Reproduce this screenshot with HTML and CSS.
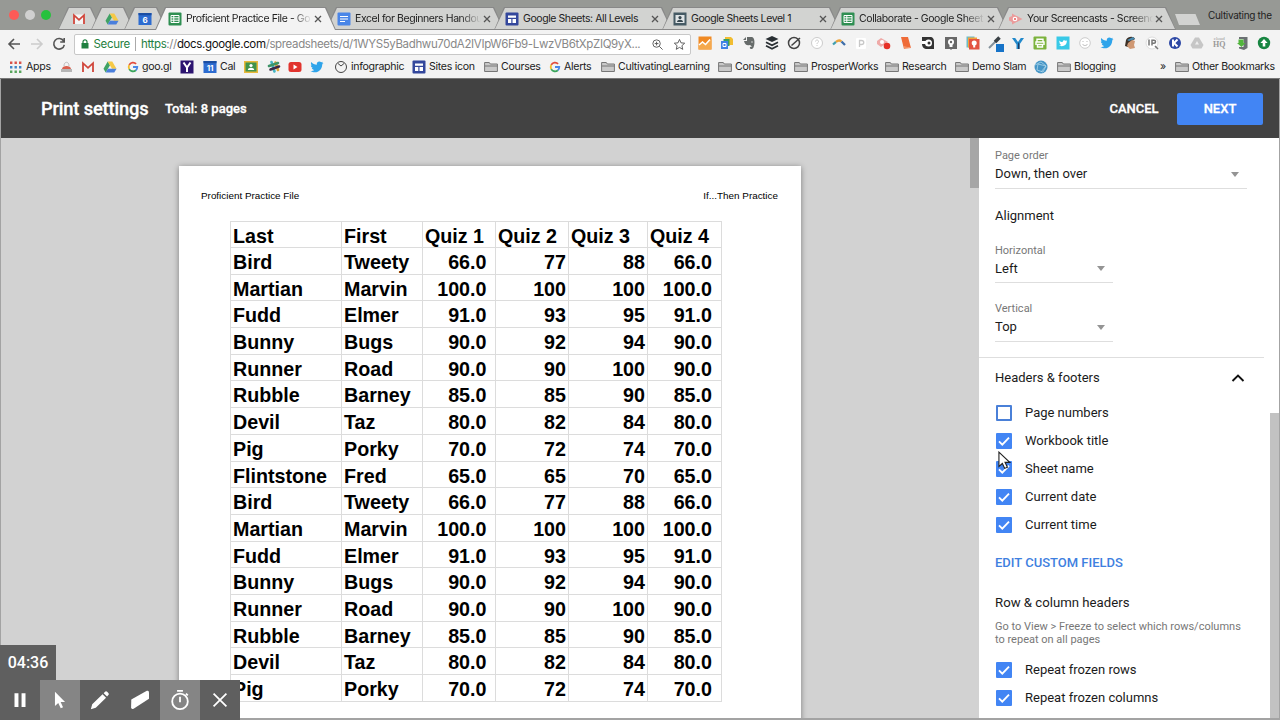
FILE: index.html
```html
<!DOCTYPE html>
<html lang="en">
<head>
    <meta charset="utf-8"/>
    <title>Proficient Practice File - Google Sheets</title>
    <link rel="stylesheet" href="styles.css">
</head>
<body>
    <!-- shared icons -->
    <svg class="sprite" width="0" height="0">
        <symbol id="gmail" viewBox="0 0 14 14"><path fill="#f4f4f4" d="M1 2.500h12v9.500H1z"/><path fill="none" stroke="#d0453a" stroke-width="1.800" d="M2 12V3.200l5 4.600 5-4.600V12"/></symbol>
        <symbol id="drive" viewBox="0 0 14 14"><path fill="#3fa264" d="M4.700 1.500L0.500 8.800l2.200 3.700L7 5.200z"/><path fill="#f6c945" d="M4.700 1.500h4.600l4.200 7.300H9z"/><path fill="#4a7fdc" d="M4.900 8.800h8.600l-2.200 3.700H2.700z"/></symbol>
        <symbol id="cal" viewBox="0 0 14 14"><path fill="#2d6cd0" d="M0.500 1h13v12h-13z"/><path fill="#1b4ea3" d="M0.500 1h13v2.200h-13z"/></symbol>
        <symbol id="sheets" viewBox="0 0 14 14"><rect x=".5" y=".5" width="13" height="13" rx="1" fill="#2f8f52"/><path fill="none" stroke="#fff" stroke-width="1" d="M3 3.500h8v7H3zM3 5.800h8M3 8.200h8M5.800 3.500v7"/></symbol>
        <symbol id="docs" viewBox="0 0 14 14"><rect x=".5" y=".5" width="13" height="13" rx="1" fill="#4a86e8"/><path stroke="#fff" stroke-width="1.200" d="M3 4.500h8M3 7h8M3 9.500h5"/></symbol>
        <symbol id="sites" viewBox="0 0 14 14"><rect x=".5" y=".5" width="13" height="13" rx="1" fill="#33479c"/><path fill="#fff" d="M3 3.500h8v2.300H3zM3 7h3.300v4H3zM7.500 7H11v4H7.500z"/></symbol>
        <symbol id="g" viewBox="0 0 14 14"><g fill="none" stroke-width="2.100"><path stroke="#e24a3b" d="M2.600 4.600A5 5 0 0 1 10.600 3.400"/><path stroke="#f2bd2e" d="M2.600 9.400a5 5 0 0 1 0-4.800"/><path stroke="#3ba55c" d="M10.300 10.800a5 5 0 0 1-7.700-1.400"/><path stroke="#4a86e8" d="M7 7h5a5 5 0 0 1-1.700 3.800"/></g></symbol>
        <symbol id="folder" viewBox="0 0 14 14"><path fill="#c9c9c9" stroke="#777" d="M.6 11.500v-9h4.700l1 1.500h7.100v7.500zM.6 6h12.800"/></symbol>
        <symbol id="bird" viewBox="0 0 14 14"><path fill="#2fa4ea" d="M13.500 3.200l-1.300 1.300C12.200 9 9 12.300 5 12.300c-1.700 0-3.200-.4-4.500-1.300 1.400.1 2.700-.2 3.700-1.100-1.200-.1-2-.8-2.400-1.900h1.100C1.600 7.600.9 6.600.9 5.300l1.100.3C.9 4.700.6 3.300 1.300 2c1.500 1.700 3.200 2.600 5.500 2.800-.5-3 2.700-4.200 4.500-2.500l1.700-.6-1 1.500z"/></symbol>
        <symbol id="close" viewBox="0 0 10 10"><path stroke="#555" stroke-width="1.300" d="M2 2l6 6M8 2L2 8"/></symbol>
        <symbol id="check" viewBox="0 0 16 16"><path fill="none" stroke="#fff" stroke-width="1.900" d="M3 8.300l3.300 3.300L13 4.700"/></symbol>
    </svg>

    <div class="browser">
        <!-- window tabs -->
        <div class="tab-strip">
            <div class="lights"><i class="red"></i><i class="grey"></i><i class="green"></i></div>
            <div class="tab pinned"><svg class="fav"><use href="#gmail"/></svg></div>
            <div class="tab pinned"><svg class="fav"><use href="#drive"/></svg></div>
            <div class="tab pinned"><span class="cal-icon"><svg class="fav"><use href="#cal"/></svg><b>6</b></span></div>
            <div class="tab active"><svg class="fav"><use href="#sheets"/></svg><span class="tab-title fade">Proficient Practice File - Go</span><svg class="close"><use href="#close"/></svg></div>
            <div class="tab"><svg class="fav"><use href="#docs"/></svg><span class="tab-title fade">Excel for Beginners Handou</span><svg class="close"><use href="#close"/></svg></div>
            <div class="tab"><svg class="fav"><use href="#sites"/></svg><span class="tab-title">Google Sheets: All Levels</span><svg class="close"><use href="#close"/></svg></div>
            <div class="tab"><svg class="fav" viewBox="0 0 14 14"><rect x=".5" y=".5" width="13" height="13" fill="#455a64"/><path fill="#dfe4e6" d="M2.500 3h9v8h-9z"/><circle cx="7" cy="5.600" r="1.600" fill="#37474f"/><path fill="#37474f" d="M4 10c0-3 6-3 6 0z"/></svg><span class="tab-title">Google Sheets Level 1</span><svg class="close"><use href="#close"/></svg></div>
            <div class="tab"><svg class="fav"><use href="#sheets"/></svg><span class="tab-title fade">Collaborate - Google Sheet</span><svg class="close"><use href="#close"/></svg></div>
            <div class="tab"><svg class="fav" viewBox="0 0 14 14"><path fill="#eb9c9c" d="M0 5.500l3-1.500V1.500l10.500 5.500L3 12.500V10L0 8.500z"/><circle cx="6" cy="7" r="2.300" fill="#fff"/><circle cx="6" cy="7" r="1.100" fill="#e86464"/></svg><span class="tab-title fade">Your Screencasts - Screenc</span><svg class="close"><use href="#close"/></svg></div>
            <div class="new-tab"></div>
            <div class="profile">Cultivating the</div>
        </div>

        <!-- address bar -->
        <div class="toolbar">
            <svg class="nav" viewBox="0 0 16 16"><path d="M14 8H3M8 3L3 8l5 5"/></svg>
            <svg class="nav off" viewBox="0 0 16 16"><path d="M2 8h11M8 3l5 5-5 5"/></svg>
            <svg class="nav" viewBox="0 0 16 16"><path d="M12.600 5A5.300 5.300 0 1 0 13.300 8.800M13.200 2v4H9.200"/></svg>
            <div class="omnibox">
                <svg class="lock" viewBox="0 0 8 10"><path fill="#1f8040" d="M.5 4h7v5.500h-7z"/><path fill="none" stroke="#1f8040" stroke-width="1.200" d="M2 4.500V2.800a2 2 0 0 1 4 0v1.700"/></svg>
                <span class="secure">Secure</span>
                <span class="url"><span class="https">https</span>://<span class="host">docs.google.com</span><span class="path">/spreadsheets/d/1WYS5yBadhwu70dA2IVIpW6Fb9-LwzVB6tXpZIQ9yX...</span></span>
                <svg class="omni-icon" viewBox="0 0 14 14"><circle cx="6" cy="6" r="4"/><path d="M9 9l3.500 3.500M4 6h4M6 4v4"/></svg>
                <svg class="omni-icon" viewBox="0 0 14 14"><path d="M7 1.500l1.600 3.700 4 .4-3 2.700.9 3.900L7 10.100l-3.500 2.100.9-3.900-3-2.700 4-.4z"/></svg>
            </div>
            <div class="extensions">
                <svg viewBox="0 0 14 14"><path fill="#f08a24" d="M.5.500h13v13H.5z"/><path fill="#f5a94d" d="M.5 9l4-4 3 3 6-5v10.500H.5z"/><path fill="none" stroke="#fff" stroke-width="1.600" d="M1 9l3.500-3 3 2.500L12 3.500"/></svg>
                <svg viewBox="0 0 14 14"><path fill="#f1bd31" d="M5 1h6l2 2v6H5z"/><path fill="#34a065" d="M3.500 3h6v7h-6z"/><path fill="#3f83e6" d="M1 5h7v8H1z"/><path fill="none" stroke="#fff" d="M3 7.500h3v3H3z"/></svg>
                <svg viewBox="0 0 14 14"><path fill="#666b6a" d="M5 1h5c3 1 3 7 1.500 10.500C10 14 7 13 8 11l2-.5-2-1.500c-3 1-5 0-6-4h3z"/><path fill="#666b6a" d="M1 4l3-3v3z"/><circle cx="10" cy="6" r=".8" fill="#ddd"/></svg>
                <svg viewBox="0 0 14 14"><path fill="#292f33" d="M7 0l6.500 3L7 6 .5 3z"/><path fill="none" stroke="#292f33" stroke-width="1.800" d="M1 6.300l6 2.900 6-2.900M1 9.800l6 2.900 6-2.900"/></svg>
                <svg viewBox="0 0 14 14"><circle cx="7" cy="7" r="5.500" fill="none" stroke="#444" stroke-width="1.500"/><path stroke="#444" stroke-width="1.600" d="M4.500 9.500L13 2"/></svg>
                <svg viewBox="0 0 14 14"><circle cx="7" cy="7" r="5.500" fill="#fff" stroke="#ccc"/><path fill="none" stroke="#ccc" d="M5.500 5.500c0-2 3-2 3 0 0 1.200-1.500 1-1.500 2.500M7 9v1"/></svg>
                <svg viewBox="0 0 14 14"><g fill="none" stroke-width="2.300"><path stroke="#3f9fb0" d="M1 8.500l3-2.700"/><path stroke="#eba23a" d="M4 5.800c2-1.600 4-1.600 5.500-.3"/><path stroke="#3e6da8" d="M9.500 5.500L13 9"/></g></svg>
                <svg viewBox="0 0 14 14"><rect x="2" y="2" width="10" height="11" rx="1" fill="#fff"/><path fill="none" stroke="#c8c8c8" stroke-width="1.300" d="M5.500 11V4.500h2c3 0 3 4 0 4h-2"/></svg>
                <svg viewBox="0 0 14 14"><path fill="#efaaa8" d="M0 5l4-3 7 4-7 5-4-3z"/><circle cx="5" cy="6" r="2" fill="#fff"/><circle cx="10" cy="10" r="3.300" fill="#e63027"/></svg>
                <svg viewBox="0 0 14 14"><path fill="#ef6b37" d="M2 1h7l3 11-4-1-3 2z"/><path fill="#f49063" d="M5 10l7 2-7 1z"/></svg>
                <svg viewBox="0 0 14 14"><path fill="#333" d="M1 1h8c3 0 4 2 4 5v7H6c-3 0-5-2-5-5z"/><circle cx="7.500" cy="7" r="3.500" fill="#fff"/><circle cx="8" cy="7" r="1.500" fill="#333"/><path fill="#fff" d="M1 5h4v3H1z"/></svg>
                <svg viewBox="0 0 14 14"><path fill="#686868" d="M1 1h12v12H8l-1 1-1-1H1z"/><circle cx="7" cy="6" r="3" fill="#fff"/><path fill="#fff" d="M5.500 8h3v3h-3z"/><circle cx="7" cy="6" r="1.200" fill="#686868"/></svg>
                <svg viewBox="0 0 14 14"><path fill="#6bbbc6" d="M.5.500h8v11h-8z"/><path fill="#f1a33a" d="M2 1.500h9v10H2z"/><path fill="#e35342" d="M3 3h10.500v10.500H3z"/><circle cx="8.200" cy="7" r="2.500" fill="#fff"/><path fill="#fff" d="M7.200 9h2v2.500h-2z"/></svg>
                <svg class="wide" viewBox="0 0 16 16"><path stroke="#83919b" stroke-width="2" d="M1 12l7-7"/><path stroke="#3a4045" stroke-width="3.500" d="M7 6l4.500-4.500"/><path fill="#1673c8" d="M8 8h8v8H8z"/></svg>
                <svg viewBox="0 0 14 14"><path fill="#2289cb" d="M1 2h3.200L7 6l2.800-4H13L8.500 8.500V13h-3V8.500z"/><path fill="#173a66" d="M7 6l1.500 2.500V13H7z"/></svg>
                <svg viewBox="0 0 14 14"><rect x=".5" y=".5" width="13" height="13" rx="1" fill="#7cb33d"/><path fill="none" stroke="#fff" stroke-width="1.400" d="M4 6V3.200h6V6M3 9V6h8v3M4.500 8.500h5V11h-5z"/></svg>
                <svg viewBox="0 0 14 14"><path fill="#38c9e7" d="M.5.500h13v13H.5z"/><svg x="2.500" y="2.500" width="9" height="9" viewBox="0 0 14 14"><path fill="#fff" d="M13 3.500c0 5-3 8.500-8 8.500-2 0-3-.5-4-1l3-1-2-2-1-5c2 2 3 2.500 5.500 2.500 0-3 3-3.500 4.500-2L13 3z"/></svg></svg>
                <svg viewBox="0 0 14 14"><circle cx="7" cy="7" r="5.300" fill="#fff" stroke="#ccc"/><path fill="none" stroke="#bbb" d="M4.500 8c1 2 4 2 5 0M5 5v1M9 5v1"/></svg>
                <svg><use href="#bird"/></svg>
                <svg viewBox="0 0 14 14"><path fill="#3d3026" d="M3 4c2-4 8-4 9-1l-3 2-4 6-3-1z"/><path fill="#cf9873" d="M5 7l4-3 3 1-1 4 1 3-5 1-3-3z"/><path fill="#4b8db3" d="M4 4l6-3 2 2-6 2z"/></svg>
                <svg viewBox="0 0 14 14"><circle cx="7" cy="7" r="6" fill="#fff" stroke="#ddd"/><path fill="none" stroke="#777" stroke-width="1.500" d="M4 3.500v6M7 9.500V4.200h2c2 0 2 3 0 3H7M10 10l3 3"/></svg>
                <svg viewBox="0 0 14 14"><circle cx="7" cy="7" r="6" fill="#2d48a5"/><path fill="none" stroke="#fff" stroke-width="2" d="M5 3.500v7M9.500 3.500L6 7l3.500 3.500"/></svg>
                <svg viewBox="0 0 14 14"><path fill="#c6c6c6" d="M5 1.500h4L13.500 9l-2 3.500h-9L.5 9z"/><path fill="#eee" d="M7 5l2 3.500H5z"/></svg>
                <div class="cloud-hq">cloud<b>HQ</b></div>
                <svg viewBox="0 0 14 14"><path fill="#6b7073" d="M4 1h8.500v11L9 14l-5-1.500V11h4.500V3H4z"/><path fill="#51b53c" d="M3.500 3.500h5V7h2L6.500 11 2 7h1.500z"/></svg>
                <svg viewBox="0 0 14 14"><circle cx="7" cy="7" r="6.200" fill="#178541"/><path fill="#fff" d="M7 3l3.600 4H8.300v3.500H5.700V7H3.400z"/></svg>
            </div>
        </div>

        <!-- bookmarks bar -->
        <div class="bookmarks">
            <span class="bm"><svg viewBox="0 0 14 14"><g stroke-width="2.400" stroke-dasharray="2.400 2.100"><path stroke="#d9534a" d="M1 2.700h12"/><path stroke="#4286c8" d="M1 7.200h12"/><path stroke="#58a55c" d="M1 11.700h12"/></g></svg>Apps</span>
            <span class="bm"><svg viewBox="0 0 14 14"><path fill="none" stroke="#bbb" d="M4 6c0-5 5-5 5 0"/><path fill="#d9604f" d="M2 9c0-4 9-4 9 0z"/><path fill="#b5b5b5" d="M1 9h11v3H1z"/></svg></span>
            <span class="bm"><svg><use href="#gmail"/></svg></span>
            <span class="bm"><svg><use href="#drive"/></svg></span>
            <span class="bm tight"><svg><use href="#g"/></svg>goo.gl</span>
            <span class="bm"><svg viewBox="0 0 14 14"><path fill="#2c1470" d="M.5.500h13v13H.5z"/><path fill="none" stroke="#fff" stroke-width="2" d="M3.500 2.500L7 7.500l3.500-5M7 7v5"/></svg></span>
            <span class="bm"><span class="cal-icon"><svg><use href="#cal"/></svg><b>11</b></span>Cal</span>
            <span class="bm"><svg viewBox="0 0 14 14"><path fill="#e9b93b" d="M0 1h14v12H0z"/><path fill="#41934b" d="M1.500 2.500h11v9h-11z"/><circle cx="7" cy="5.500" r="1.600" fill="#fff"/><path fill="#fff" d="M3.800 10c0-3 6.400-3 6.400 0z"/></svg></span>
            <span class="bm"><svg viewBox="0 0 14 14"><g stroke-width="2.600" stroke-linecap="round"><path stroke="#45b5c4" d="M4.500 2l3 9.500"/><path stroke="#e0a632" d="M8.500 2.500L11 10"/><path stroke="#3d9467" d="M2 6l9-3"/><path stroke="#3b2a46" d="M3.500 9.500l8.500-3"/></g></svg></span>
            <span class="bm"><svg viewBox="0 0 14 14"><rect x=".5" y="2" width="13" height="10" rx="2.500" fill="#e1342e"/><path fill="#fff" d="M5.500 4.500L9.500 7l-4 2.500z"/></svg></span>
            <span class="bm"><svg><use href="#bird"/></svg></span>
            <span class="bm"><svg viewBox="0 0 14 14"><circle cx="7" cy="7" r="5.500" fill="none" stroke="#444"/><path fill="none" stroke="#444" d="M4 3.500L7 6l3-2.500"/></svg>infographic</span>
            <span class="bm"><svg><use href="#sites"/></svg>Sites icon</span>
            <span class="bm"><svg><use href="#folder"/></svg>Courses</span>
            <span class="bm tight"><svg><use href="#g"/></svg>Alerts</span>
            <span class="bm"><svg><use href="#folder"/></svg>CultivatingLearning</span>
            <span class="bm"><svg><use href="#folder"/></svg>Consulting</span>
            <span class="bm"><svg><use href="#folder"/></svg>ProsperWorks</span>
            <span class="bm"><svg><use href="#folder"/></svg>Research</span>
            <span class="bm"><svg><use href="#folder"/></svg>Demo Slam</span>
            <span class="bm"><svg viewBox="0 0 14 14"><circle cx="7" cy="7" r="6.500" fill="#4595c6"/><path fill="none" stroke="#a9d4ea" stroke-width=".8" d="M1 5l6-3 5 4-3 6-6-2 1-6 8 2-5 6"/></svg></span>
            <span class="bm"><svg><use href="#folder"/></svg>Blogging</span>
            <span class="bm">»</span>
            <span class="bm"><svg><use href="#folder"/></svg>Other Bookmarks</span>
        </div>
    </div>

    <div class="app">
        <div class="app-header">
            <h1>Print settings</h1>
            <span class="total">Total: 8 pages</span>
            <button class="cancel">CANCEL</button>
            <button class="next">NEXT</button>
        </div>

        <div class="main">
            <div class="preview">
                <div class="paper">
                    <div class="paper-header"><span>Proficient Practice File</span><span>If...Then Practice</span></div>
                    <div class="sheet" id="sheet"></div>
                </div>
                <div class="preview-thumb"></div>
            </div>

            <div class="settings">
                <div class="field wide">
                    <label>Page order</label>
                    <div class="select">Down, then over<i></i></div>
                </div>
                <h3 class="alignment">Alignment</h3>
                <div class="field horizontal">
                    <label>Horizontal</label>
                    <div class="select">Left<i></i></div>
                </div>
                <div class="field">
                    <label>Vertical</label>
                    <div class="select">Top<i></i></div>
                </div>
                <div class="section-title">
                    <h3>Headers &amp; footers</h3>
                    <svg viewBox="0 0 14 14"><path fill="none" stroke="#111" stroke-width="1.900" d="M1.500 10L7 4.500l5.500 5.500"/></svg>
                </div>
                <div class="option"><span class="box"></span>Page numbers</div>
                <div class="option"><span class="box on"><svg><use href="#check"/></svg></span>Workbook title</div>
                <div class="option">
                    <span class="box on"><svg><use href="#check"/></svg>
                        <svg class="cursor" viewBox="0 0 14 20"><path fill="#fff" stroke="#222" stroke-width="1.200" d="M1 1v15.500l3.700-3.300 2.500 5.300 2.900-1.300-2.500-5.200h5z"/></svg>
                    </span>Sheet name
                </div>
                <div class="option"><span class="box on"><svg><use href="#check"/></svg></span>Current date</div>
                <div class="option"><span class="box on"><svg><use href="#check"/></svg></span>Current time</div>
                <div class="edit-link">EDIT CUSTOM FIELDS</div>
                <h3 class="row-headers">Row &amp; column headers</h3>
                <p class="hint">Go to View &gt; Freeze to select which rows/columns<br>to repeat on all pages</p>
                <div class="option"><span class="box on"><svg><use href="#check"/></svg></span>Repeat frozen rows</div>
                <div class="option"><span class="box on"><svg><use href="#check"/></svg></span>Repeat frozen columns</div>
                <div class="settings-thumb"></div>
            </div>
        </div>
    </div>

    <!-- screen recorder controls -->
    <div class="recorder">
        <div class="timer">04:36</div>
        <div class="controls">
            <span><svg viewBox="0 0 24 24"><path fill="#fff" d="M6 4.500h4.300v15H6zM13.700 4.500H18v15h-4.300z"/></svg></span>
            <span class="lit"><svg viewBox="0 0 24 24"><path fill="#fff" d="M6.500 3v15.500l3.600-3.200 2.700 5.700 2.500-1.200-2.600-5.500h4.800z"/></svg></span>
            <span><svg viewBox="0 0 24 24"><path fill="#fff" d="M2 22l1.500-5.500L14.800 5.700l3.800 3.800L7.400 20.500zM16 4.600l1.800-1.800q1-.8 2 .2l1.500 1.500q.8 1 0 1.900l-1.600 1.700z"/></svg></span>
            <span><svg viewBox="0 0 24 24"><path fill="#fff" d="M2.500 11.500L19.500 2q2.300-.7 2.300 1.600v7L5 21.500q-2.600 1-2.700-1.500z"/></svg></span>
            <span class="lit"><svg viewBox="0 0 24 24"><circle cx="12" cy="13.500" r="8.500" fill="none" stroke="#fff" stroke-width="2"/><path stroke="#fff" stroke-width="2" d="M12 8.500v6M8.800 2h6.400M18.500 5l2 2"/></svg></span>
            <span><svg viewBox="0 0 24 24"><path stroke="#fff" stroke-width="1.900" d="M5 5l14 14M19 5L5 19"/></svg></span>
        </div>
    </div>

    <script>
        // quiz scores shown on the printed page
        const header = ['Last', 'First', 'Quiz 1', 'Quiz 2', 'Quiz 3', 'Quiz 4'];
        const students = [
            ['Bird', 'Tweety', '66.0', '77', '88', '66.0'],
            ['Martian', 'Marvin', '100.0', '100', '100', '100.0'],
            ['Fudd', 'Elmer', '91.0', '93', '95', '91.0'],
            ['Bunny', 'Bugs', '90.0', '92', '94', '90.0'],
            ['Runner', 'Road', '90.0', '90', '100', '90.0'],
            ['Rubble', 'Barney', '85.0', '85', '90', '85.0'],
            ['Devil', 'Taz', '80.0', '82', '84', '80.0'],
            ['Pig', 'Porky', '70.0', '72', '74', '70.0'],
            ['Flintstone', 'Fred', '65.0', '65', '70', '65.0']
        ];
        const rows = [header].concat(students, students.slice(0, 8));
        const sheet = document.getElementById('sheet');

        rows.forEach(function(row, i) {
            const line = document.createElement('div');
            line.className = i === 0 ? 'row head' : 'row';
            row.forEach(function(value) {
                const cell = document.createElement('span');
                cell.textContent = value;
                line.appendChild(cell);
            });
            sheet.appendChild(line);
        });
    </script>
</body>
</html>
```
FILE: styles.css
```css
* {
    box-sizing: border-box;
}
body {
    margin: 0;
    width: 1280px;
    height: 720px;
    overflow: hidden;
    position: relative;
    font-family: Roboto, "Liberation Sans", sans-serif;
    color: #1b1b1b;
    background: #fff;
}
h1, h3, p {
    margin: 0;
    font-weight: normal;
}
.sprite {
    position: absolute;
}

/* browser chrome */
.browser {
    height: 79px;
    background: #f3f3f3;
    border-bottom: 1px solid #777;
    font-family: Inter, Roboto, sans-serif;
    font-size: 10.600px;
    letter-spacing: -0.300px;
    color: #222;
}
.tab-strip {
    height: 30px;
    padding-top: 7px;
    display: flex;
    background: #979995;
    position: relative;
}
.lights {
    width: 58px;
    padding: 3px 0 0 9px;
    display: flex;
    gap: 6px;
}
.lights i {
    width: 10px;
    height: 10px;
    border-radius: 50%;
}
.lights .red { background: #fc5b57; }
.lights .grey { background: #d0d0d0; }
.lights .green { background: #27c13e; }
.tab {
    position: relative;
    z-index: 1;
    display: flex;
    align-items: center;
    flex: none;
    width: 178px;
    height: 23px;
    margin-right: -10px;
    padding: 0 10px 0 11px;
    background: #888;
    clip-path: polygon(10px 0, calc(100% - 10px) 0, 100% 100%, 0 100%);
}
.tab::before {
    content: "";
    position: absolute;
    inset: 1px 1px 1px 1px;
    background: #d2d3d1;
    clip-path: polygon(10px 0, calc(100% - 10px) 0, 100% 100%, 0 100%);
}
.tab > * {
    position: relative;
    flex: none;
}
.tab.pinned {
    width: 43px;
    padding-left: 14px;
}
.tab.active {
    z-index: 2;
    width: 181px;
    margin-left: -2px;
    padding-left: 13px;
}
.tab.active::before {
    bottom: 0;
    background: #f3f3f3;
}
.fav {
    width: 14px;
    height: 14px;
}
.tab-title {
    width: 126px;
    margin-left: 4px;
    overflow: hidden;
    white-space: nowrap;
    font-size: 10.500px;
    line-height: 15px;
    letter-spacing: -0.420px;
}
.tab-title.fade {
    -webkit-mask-image: linear-gradient(to right, #000 84%, transparent 100%);
    mask-image: linear-gradient(to right, #000 84%, transparent 100%);
}
.close {
    width: 10px;
    height: 10px;
    margin-left: 1px;
}
.cal-icon {
    display: inline-flex;
    position: relative;
}
.cal-icon b {
    position: absolute;
    left: 0;
    width: 14px;
    top: 3px;
    font-size: 8px;
    line-height: 10px;
    text-align: center;
    color: #fff;
}
.new-tab {
    width: 25px;
    height: 11px;
    flex: none;
    margin: 7px 0 0 9px;
    background: #d2d3d1;
    clip-path: polygon(0 0, 82% 0, 100% 100%, 16% 100%);
}
.profile {
    margin-left: 8px;
    padding-top: 2px;
    font-size: 10px;
    white-space: nowrap;
}
.toolbar {
    height: 28px;
    display: flex;
    align-items: center;
    padding-left: 6px;
}
.nav {
    width: 16px;
    height: 16px;
    margin-right: 6.500px;
    fill: none;
    stroke: #555;
    stroke-width: 1.600;
}
.nav.off {
    stroke: #ccc;
}
.omnibox {
    width: 617px;
    height: 21px;
    flex: none;
    display: flex;
    align-items: center;
    padding-left: 6px;
    background: #fff;
    border: 1px solid #c8c8c8;
    border-radius: 2px;
    font-size: 11.500px;
}
.lock {
    width: 8px;
    height: 10px;
    flex: none;
}
.secure {
    margin-left: 5px;
    padding-right: 5px;
    border-right: 1px solid #aaa;
    color: #1f8040;
}
.url {
    width: 510px;
    flex: none;
    margin-left: 5px;
    letter-spacing: -0.360px;
    white-space: nowrap;
    color: #888;
}
.https { color: #1f8040; }
.host { color: #111; }
.omni-icon {
    width: 13px;
    height: 13px;
    margin-right: 9px;
    flex: none;
    fill: none;
    stroke: #555;
}
.extensions {
    display: flex;
    margin-left: 3px;
}
.extensions > * {
    width: 14px;
    height: 14px;
    flex: none;
    margin: 0 4.200px;
}
.extensions .wide {
    width: 16px;
    height: 16px;
    margin: 0 3.200px;
}
.cloud-hq {
    display: flex;
    flex-direction: column;
    align-items: center;
    font: 5px/5px "Liberation Serif", serif;
    letter-spacing: 0;
    color: #999;
}
.cloud-hq b {
    font-size: 8px;
    line-height: 8px;
}
.bookmarks {
    height: 17px;
    display: grid;
    grid-template-columns: 51px 21px 22px 24px 53px 23px 41px 23px 21px 22px 24px 78px 72px 65px 52px 117px 76px 91px 70px 79px 23px 103px 15px 104px;
    align-items: center;
    padding-left: 9px;
}
.bm {
    display: flex;
    align-items: center;
    white-space: nowrap;
}
.bm svg {
    width: 14px;
    height: 14px;
    margin-right: 3px;
    flex: none;
}
.bm.tight svg {
    width: 12px;
}

/* print settings */
.app {
    height: 641px;
    display: flex;
    flex-direction: column;
    border: solid #a3a3a3;
    border-width: 0 1px 2px 1px;
}
.app-header {
    height: 59px;
    flex: none;
    display: flex;
    align-items: center;
    padding: 0 16px 0 40px;
    background: #424242;
    color: #fff;
    -webkit-text-stroke: 0.300px #fff;
}
.app-header h1 {
    width: 124px;
    font-size: 18.300px;
    font-weight: 500;
    letter-spacing: -0.150px;
    white-space: nowrap;
}
.total {
    font-size: 13px;
    font-weight: 500;
}
.app-header button {
    height: 32px;
    padding: 0;
    border: none;
    border-radius: 2px;
    background: none;
    color: #fff;
    font: 500 13px Roboto, sans-serif;
}
.app-header .cancel {
    width: 86px;
    margin-left: auto;
}
.app-header .next {
    width: 86px;
    background: #4285f4;
}
.main {
    flex: 1;
    min-height: 0;
    display: flex;
}
.preview {
    width: 978px;
    flex: none;
    position: relative;
    overflow: hidden;
    padding: 28px 0 0 178px;
    background: #d2d2d2;
}
.paper {
    width: 622px;
    height: 800px;
    background: #fff;
    box-shadow: 0 1px 6px rgba(0,0,0,0.4);
    font-family: "Liberation Sans", Arial, sans-serif;
    color: #000;
}
.paper-header {
    display: flex;
    justify-content: space-between;
    padding: 22px 23px 0 22px;
    font-size: 9.900px;
    line-height: 15px;
}
.sheet {
    width: 492px;
    margin: 18px 0 0 51px;
    border: solid #dcdcdc;
    border-width: 1px 0 0 1px;
    font-size: 19.700px;
    font-weight: bold;
}
.row {
    height: 26.700px;
    display: grid;
    grid-template-columns: 111px 81px 73px 73px 79px 73.500px;
    grid-template-rows: 100%;
    line-height: 29px;
}
.row.head {
    height: 26px;
}
.row span {
    border: solid #dcdcdc;
    border-width: 0 1px 1px 0;
    padding: 0 2px;
    white-space: nowrap;
}
.row:not(.head) span:nth-child(n+3) {
    text-align: right;
}
.row:not(.head) span:nth-child(3),
.row:not(.head) span:nth-child(6) {
    padding-right: 8.500px;
}
.preview-thumb {
    position: absolute;
    top: 0;
    right: 0;
    width: 9px;
    height: 50px;
    background: #a6a6a6;
}
.settings {
    flex: 1;
    position: relative;
    padding: 10px 15px 0 16px;
    font-size: 13px;
    line-height: 16px;
}
.settings h3 {
    font-size: 13px;
}
.field {
    width: 118px;
    margin-top: 18px;
}
.field.wide {
    width: 252px;
    margin-top: 0;
}
.field label {
    display: block;
    font-size: 11px;
    color: #777;
}
.select {
    height: 25px;
    display: flex;
    align-items: center;
    justify-content: space-between;
    padding: 0 8px 4px 0;
    border-bottom: 1px solid #dedede;
}
.horizontal .select {
    height: 24px;
}
.select i {
    border: solid transparent;
    border-width: 5px 4px 0;
    border-top-color: #949494;
}
.alignment {
    margin: 19px 0;
}
.section-title {
    display: flex;
    justify-content: space-between;
    align-items: center;
    height: 40px;
    margin: 15px 0 2px -16px;
    padding: 0 19px 0 16px;
    border-top: 1px solid #dedede;
}
.section-title svg {
    width: 14px;
    height: 14px;
}
.option {
    height: 28px;
    display: flex;
    align-items: center;
}
.box {
    position: relative;
    width: 16px;
    height: 16px;
    margin: 0 13px 0 1px;
    border: 2px solid #4a80d8;
    border-radius: 1px;
}
.box.on {
    border: none;
    background: #4285f4;
}
.box svg {
    display: block;
    width: 16px;
    height: 16px;
}
.box .cursor {
    position: absolute;
    left: 2px;
    top: -10px;
    width: 13px;
    height: 19px;
}
.edit-link {
    margin-top: 16px;
    color: #3f7fe0;
    font-weight: 500;
}
.settings .row-headers {
    margin-top: 24px;
    font-size: 13.200px;
}
.hint {
    margin: 9px 0 10px;
    font-size: 11px;
    line-height: 13px;
    color: #777;
    white-space: nowrap;
}
.settings-thumb {
    position: absolute;
    right: 0;
    bottom: 0;
    width: 9px;
    height: 305px;
    background: #c2c2c2;
}

/* recorder */
.recorder {
    position: absolute;
    left: 0;
    bottom: 0;
    z-index: 5;
}
.timer {
    width: 56px;
    height: 35px;
    background: #5f5f5f;
    color: #fff;
    font-size: 16px;
    font-weight: 500;
    line-height: 35px;
    text-align: center;
}
.controls {
    display: flex;
}
.controls span {
    width: 40px;
    height: 40px;
    display: flex;
    align-items: center;
    justify-content: center;
    background: #5f5f5f;
}
.controls .lit {
    background: #858585;
}
.controls svg {
    width: 22px;
    height: 22px;
}
```
